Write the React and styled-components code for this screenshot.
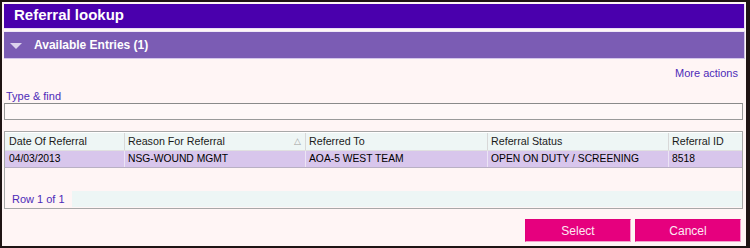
import React from "react";
import styled, { createGlobalStyle } from "styled-components";

const Global = createGlobalStyle`
  html, body { margin: 0; padding: 0; background: #fff5f5; }
  body { font-family: "Liberation Sans", Arial, sans-serif; font-size: 11px; }
`;

const Frame = styled.div`
  box-sizing: border-box;
  width: 750px;
  height: 248px;
  border-style: solid;
  border-color: #1f1414;
  border-width: 2px 4px 2px 2px;
  background: #fff5f5;
  padding: 2px 1px 0 2px;
  display: flex;
  flex-direction: column;
`;

const TitleBar = styled.div`
  height: 24px;
  background: #4a00ad;
  border: 1px solid #e8def5;
  border-top: none;
  border-left: none;
  color: #fff;
  font-weight: bold;
  font-size: 15px;
  line-height: 22px;
  padding-left: 10px;
`;

const Section = styled.div`
  margin-top: 2px;
  height: 26px;
  background: #7b5cb4;
  border: 1px solid #d3c6ea;
  border-top-color: #efe8f8;
  border-left: none;
  color: #fff;
  font-weight: bold;
  font-size: 12px;
  display: flex;
  align-items: center;
  gap: 12px;
  padding-left: 6px;
`;

const Caret = styled.span`
  width: 0;
  height: 0;
  border-left: 6px solid transparent;
  border-right: 6px solid transparent;
  border-top: 6px solid #ddd3ee;
  margin-top: 1px;
`;

const ActionsRow = styled.div`
  display: flex;
  justify-content: flex-end;
  padding: 8px 7px 0 0;
  height: 19px;
`;

const Link = styled.span`
  color: #4d2bb8;
  font-size: 11px;
`;

const Label = styled.div`
  color: #4d2bb8;
  font-size: 11px;
  margin-top: 4px;
  padding-left: 2px;
  height: 13px;
  line-height: 13px;
`;

const Input = styled.div`
  height: 15px;
  border: 1px solid #9a9a9a;
  border-top-color: #8a8a8a;
  background: #fff8f8;
  margin-right: 2px;
`;

const Grid = styled.div`
  margin-top: 11px;
  margin-right: 2px;
  border: 1px solid #a8a8a8;
  height: 76px;
  display: flex;
  flex-direction: column;
  background: #fff5f5;
`;

const Row = styled.div`
  display: grid;
  grid-template-columns: 119px 181px 182px 181px 1fr;
  height: ${(p) => (p.$head ? 17 : 16)}px;
  background: ${(p) => (p.$head ? "#eef6f5" : "#d8c6ec")};
  border-bottom: 1px solid ${(p) => (p.$head ? "#e0e0e0" : "#b9b0c4")};
  ${(p) => p.$head && "border-top: 1px solid #fff;"}
`;

const Cell = styled.div`
  position: relative;
  padding-left: 3px;
  line-height: ${(p) => (p.$head ? 16 : 15)}px;
  color: ${(p) => (p.$head ? "#1a1a1a" : "#000")};
  font-size: ${(p) => (p.$head ? 10.7 : 10.3)}px;
  border-left: 1px solid ${(p) => (p.$first ? "transparent" : p.$head ? "#d8d8d8" : "#ece4f5")};
  white-space: nowrap;
  overflow: hidden;
`;

const SortMark = styled.span`
  position: absolute;
  right: 4px;
  top: 0;
  color: #a0a0a0;
  font-size: 9px;
`;

const Spacer = styled.div`
  flex: 1;
`;

const Footer = styled.div`
  display: flex;
  height: 16px;
  margin-bottom: 1px;
`;

const Pager = styled.div`
  color: #4d2bb8;
  font-size: 11px;
  padding-left: 7px;
  width: 60px;
  line-height: 16px;
`;

const FooterFill = styled.div`
  flex: 1;
  background: #edf6f5;
`;

const Buttons = styled.div`
  display: flex;
  justify-content: flex-end;
  gap: 4px;
  margin-top: 10px;
  padding-right: 4px;
`;

const Button = styled.button`
  width: 106px;
  height: 23px;
  border: 1px solid #f3a0cc;
  border-top-color: #e0007a;
  border-left-color: #e0007a;
  background: #e6007e;
  color: #fde9f3;
  font-family: "Liberation Sans", Arial, sans-serif;
  font-size: 12px;
  padding: 0;
  cursor: pointer;
`;

const cols = [
  "Date Of Referral",
  "Reason For Referral",
  "Referred To",
  "Referral Status",
  "Referral ID",
];
const data = [
  "04/03/2013",
  "NSG-WOUND MGMT",
  "AOA-5 WEST TEAM",
  "OPEN ON DUTY / SCREENING",
  "8518",
];

export default function App() {
  return (
    <>
      <Global />
      <Frame>
        <TitleBar>Referral lookup</TitleBar>
        <Section>
          <Caret />
          Available Entries (1)
        </Section>
        <ActionsRow>
          <Link>More actions</Link>
        </ActionsRow>
        <Label>Type &amp; find</Label>
        <Input />
        <Grid>
          <Row $head>
            {cols.map((c, i) => (
              <Cell key={c} $head $first={i === 0}>
                {c}
                {i === 1 && <SortMark>△</SortMark>}
              </Cell>
            ))}
          </Row>
          <Row>
            {data.map((d, i) => (
              <Cell key={d} $first={i === 0}>
                {d}
              </Cell>
            ))}
          </Row>
          <Spacer />
          <Footer>
            <Pager>Row 1 of 1</Pager>
            <FooterFill />
          </Footer>
        </Grid>
        <Buttons>
          <Button>Select</Button>
          <Button>Cancel</Button>
        </Buttons>
      </Frame>
    </>
  );
}
